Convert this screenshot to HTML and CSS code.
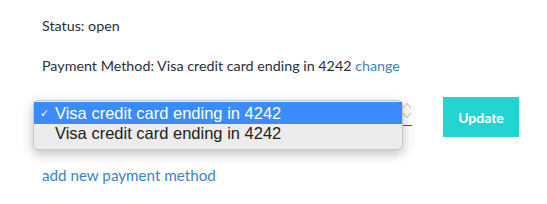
FILE: index.html
```html
<!DOCTYPE html>
<html lang="en">
<head>
    <meta charset="UTF-8">
    <title>Subscription</title>
    <link rel="stylesheet" href="styles.css">
</head>
<body>
    <main class="subscription">
        <p class="line">Status: open</p>
        <p class="line">Payment Method: Visa credit card ending in 4242 <a href="#">change</a></p>

        <div class="method-row">
            <div class="select">
                <span class="select-value">Visa credit card ending in 4242</span>
                <svg class="select-arrows" width="10" height="19" viewBox="0 0 10 19">
                    <path d="M1 7 L5 2.5 L9 7" fill="none" stroke="#b8b8b8" stroke-width="1"/>
                    <path d="M1 12 L5 16.5 L9 12" fill="none" stroke="#b8b8b8" stroke-width="1"/>
                </svg>
                <ul class="select-menu">
                    <li class="selected"><span class="check">✓</span>Visa credit card ending in 4242</li>
                    <li><span class="check"></span>Visa credit card ending in 4242</li>
                </ul>
            </div>
            <button class="update">Update</button>
        </div>

        <a href="#" class="add-method">add new payment method</a>
    </main>
</body>
</html>
```

FILE: styles.css
```css
body {
    margin: 0;
    background: #ffffff;
    font-family: Lato, "Noto Sans", sans-serif;
    font-size: 14.3px;
    color: #2c2e3b;
}
a {
    color: #3b84c3;
    text-decoration: none;
}
.subscription {
    padding: 17px 0 0 42px;
}
.line {
    margin: 0 0 22px;
    line-height: 18px;
}
.method-row {
    display: flex;
    align-items: flex-start;
    margin-top: 13px;
}
.select {
    position: relative;
    width: 370px;
    height: 28px;
    border-bottom: 1px solid #6a2fd6;
    display: flex;
    justify-content: space-between;
    align-items: flex-start;
}
.select-value {
    visibility: hidden;
}
.select-arrows {
    margin-top: 4px;
}
.select-menu {
    position: absolute;
    left: -9px;
    top: 3px;
    width: 368px;
    margin: 0;
    padding: 1px 0 6px;
    list-style: none;
    background: #ececec;
    border: 1px solid #c9c9c9;
    border-radius: 5px;
    box-shadow: 0 4px 12px rgba(0, 0, 0, 0.25);
    font-family: "Liberation Sans", Arial, sans-serif;
    font-size: 16.5px;
    color: #222222;
}
.select-menu li {
    display: flex;
    align-items: center;
    height: 19px;
}
.select-menu li.selected {
    background: #3b8bfb;
    color: #ffffff;
    height: 22px;
}
.check {
    width: 15px;
    text-align: right;
    padding-right: 6px;
    font-size: 11px;
}
.update {
    margin-left: 31px;
    width: 76px;
    height: 40px;
    border: none;
    background: #24d4d2;
    color: #ffffff;
    font-family: inherit;
    font-size: 14px;
    font-weight: bold;
    padding: 0;
}
.add-method {
    display: inline-block;
    margin-top: 29px;
    font-size: 15.2px;
}
```
